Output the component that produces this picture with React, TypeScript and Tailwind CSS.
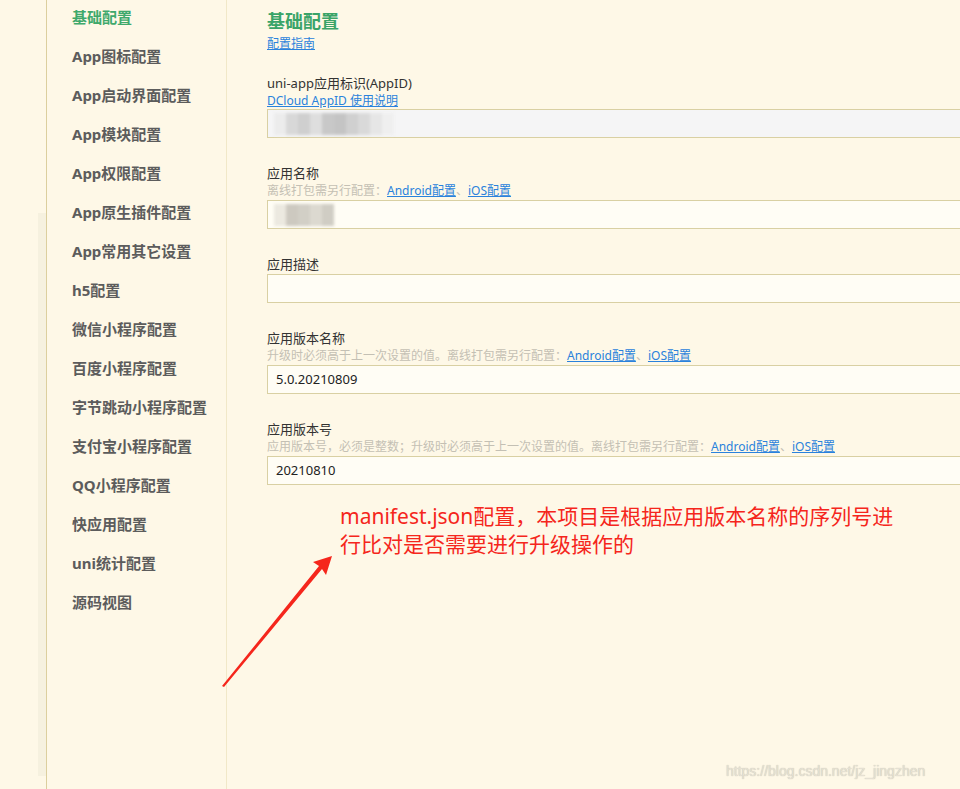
import React from 'react';

const navItems = [
  '基础配置',
  'App图标配置',
  'App启动界面配置',
  'App模块配置',
  'App权限配置',
  'App原生插件配置',
  'App常用其它设置',
  'h5配置',
  '微信小程序配置',
  '百度小程序配置',
  '字节跳动小程序配置',
  '支付宝小程序配置',
  'QQ小程序配置',
  '快应用配置',
  'uni统计配置',
  '源码视图',
];

const font = 'font-["Noto_Sans","Noto_Sans_CJK_SC",sans-serif]';

function PlatformLinks() {
  return (
    <>
      <a className="text-[#2a82dc] underline">Android配置</a>
      <span>、</span>
      <a className="text-[#2a82dc] underline">iOS配置</a>
    </>
  );
}

function Mosaic({ cells }: { cells: string[] }) {
  return (
    <div className="flex h-full items-center pl-[6px] blur-[1.5px]">
      {cells.map((c, i) => (
        <div key={i} className="h-[22px] w-[12px]" style={{ backgroundColor: c }} />
      ))}
    </div>
  );
}

interface FieldProps {
  label: string;
  hint?: React.ReactNode;
  value?: string;
  disabled?: boolean;
  children?: React.ReactNode;
  className?: string;
}

function Field({ label, hint, value, disabled, children, className }: FieldProps) {
  return (
    <div className={className}>
      <div className="text-[13px] leading-[18px] text-[#333]">{label}</div>
      {hint && <div className="mt-px text-[12px] leading-[16px] text-[#c4c0b4]">{hint}</div>}
      <div
        className={`mt-px h-[29px] w-[720px] border border-[#d9d0a3] ${
          disabled ? 'bg-[#f5f5f5]' : 'bg-[#fffdf5]'
        }`}
      >
        {children ?? (
          <div className="px-[8px] text-[13px] leading-[27px] text-[#222]">{value}</div>
        )}
      </div>
    </div>
  );
}

export default function App() {
  return (
    <div className={`relative flex h-[789px] w-[960px] overflow-hidden bg-[#fef8e7] ${font}`}>
      {/* left gutter */}
      <div className="w-[46px] shrink-0 pt-[213px]">
        <div className="ml-[38px] h-[563px] w-[8px] bg-[#f6f1df]" />
      </div>

      {/* sidebar */}
      <nav className="w-[181px] shrink-0 border-l border-r border-l-[#dccf9e] border-r-[#f1e8c8] pl-[25px]">
        <ul className="-mt-[2px]">
          {navItems.map((item, i) => (
            <li
              key={item}
              className={`text-[15px] font-bold leading-[39px] ${
                i === 0 ? 'text-[#3fa96c]' : 'text-[#5c5c5c]'
              }`}
            >
              {item}
            </li>
          ))}
        </ul>
      </nav>

      {/* main */}
      <main className="min-w-0 flex-1 overflow-hidden pl-[40px] pt-[9px]">
        <h1 className="text-[18px] font-bold leading-[24px] text-[#3aa468]">基础配置</h1>
        <a className="mt-[3px] block text-[12px] leading-[16px] text-[#2a82dc] underline">配置指南</a>

        <div className="mt-[22px]">
          <div className="text-[13px] leading-[18px] text-[#333]">uni-app应用标识(AppID)</div>
          <a className="mt-px block text-[12px] leading-[16px] text-[#2a82dc] underline">
            DCloud AppID 使用说明
          </a>
          <div className="h-[29px] w-[720px] border border-[#d9d0a3] bg-[#f5f5f6]">
            <Mosaic
              cells={['#ececec', '#d8d8d8', '#cfcfcf', '#dedede', '#c8c8c8', '#c4c4c4', '#d0d0d0', '#d9d9d9', '#e6e6e6', '#efefef']}
            />
          </div>
        </div>

        <Field
          className="mt-[26px]"
          label="应用名称"
          hint={
            <>
              离线打包需另行配置：<PlatformLinks />
            </>
          }
        >
          <Mosaic cells={['#ece9e0', '#cdc9c0', '#d2cfc6', '#dcd9d0', '#d0cdc4']} />
        </Field>

        <Field className="mt-[26px]" label="应用描述" />

        <Field
          className="mt-[26px]"
          label="应用版本名称"
          hint={
            <>
              升级时必须高于上一次设置的值。离线打包需另行配置：<PlatformLinks />
            </>
          }
          value="5.0.20210809"
        />

        <Field
          className="mt-[26px]"
          label="应用版本号"
          hint={
            <>
              应用版本号，必须是整数；升级时必须高于上一次设置的值。离线打包需另行配置：<PlatformLinks />
            </>
          }
          value="20210810"
        />

        <p className="ml-[73px] mt-[17px] whitespace-nowrap text-[21px] leading-[28px] text-[#f5261c]">
          manifest.json配置，本项目是根据应用版本名称的序列号进
          <br />
          行比对是否需要进行升级操作的
        </p>
      </main>

      {/* annotation arrow */}
      <svg className="pointer-events-none absolute left-0 top-0" width="960" height="789">
        <polygon points="222,686 319,566 313,562 332,556 326,575 322,569 224,687" fill="#f5261c" />
      </svg>

      {/* watermark */}
      <div className="absolute bottom-[9px] left-[726px] font-['Liberation_Sans',sans-serif] text-[14px] leading-[18px] text-[#e6e1d3] [text-shadow:0_0_1px_#b8b4a8]">
        https://blog.csdn.net/jz_jingzhen
      </div>
    </div>
  );
}
